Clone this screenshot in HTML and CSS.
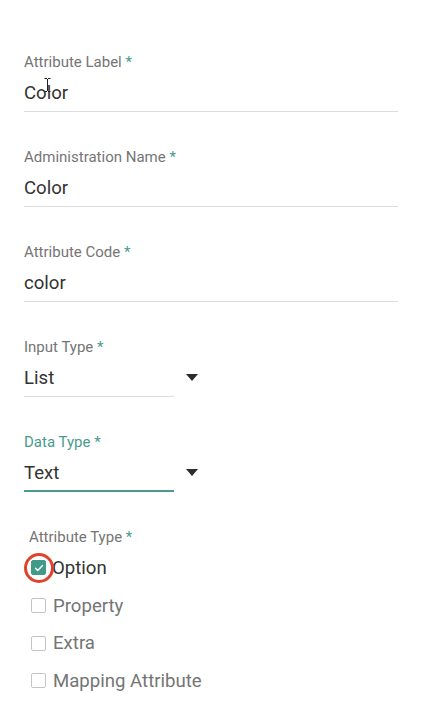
FILE: index.html
```html
<!DOCTYPE html>
<html>
<head>
<meta charset="utf-8">
<link rel="stylesheet" href="styles.css">
</head>
<body>
<form class="form">
  <div class="field">
    <div class="label">Attribute Label <span class="req">*</span></div>
    <div class="input">Color<svg class="ibeam" width="7" height="14" viewBox="0 0 7 14"><path d="M0.5 0.5h2.5M4 0.5h2.5M3.5 1v12M0.5 13.5h2.5M4 13.5h2.5" stroke="#222" stroke-width="1" fill="none"/></svg></div>
  </div>
  <div class="field">
    <div class="label">Administration Name <span class="req">*</span></div>
    <div class="input">Color</div>
  </div>
  <div class="field">
    <div class="label">Attribute Code <span class="req">*</span></div>
    <div class="input">color</div>
  </div>
  <div class="field">
    <div class="label">Input Type <span class="req">*</span></div>
    <div class="select-row">
      <div class="input select">List</div>
      <span class="arrow"></span>
    </div>
  </div>
  <div class="field focused">
    <div class="label">Data Type <span class="req">*</span></div>
    <div class="select-row">
      <div class="input select">Text</div>
      <span class="arrow"></span>
    </div>
  </div>
  <div class="group">
    <div class="group-label">Attribute Type <span class="req">*</span></div>
    <div class="checks">
      <label class="check checked">
        <span class="box"><svg width="10" height="10" viewBox="0 0 10 10"><path d="M1.5 5.2l2.3 2.3 4.7-5" stroke="#fff" stroke-width="1.4" fill="none" stroke-linecap="round" stroke-linejoin="round"/></svg><span class="ring"></span></span>
        <span class="text">Option</span>
      </label>
      <label class="check"><span class="box"></span><span class="text">Property</span></label>
      <label class="check"><span class="box"></span><span class="text">Extra</span></label>
      <label class="check"><span class="box"></span><span class="text">Mapping Attribute</span></label>
    </div>
  </div>
</form>
</body>
</html>
```

FILE: styles.css
```css
html, body {
  margin: 0;
  padding: 0;
  background: #fff;
}
body {
  font-family: Roboto, "Liberation Sans", sans-serif;
  color: #333;
}
.form {
  padding: 54px 0 0 24px;
  width: 374px;
}
.field {
  margin-bottom: 37px;
}
.label {
  font-size: 15px;
  line-height: 16px;
  color: #757575;
}
.req {
  color: #4a9a8e;
}
.input {
  position: relative;
  margin-top: 11px;
  font-size: 18.6px;
  line-height: 24px;
  padding-bottom: 6px;
  border-bottom: 1px solid #dcdcdc;
  color: #333;
}
.ibeam {
  position: absolute;
  left: 20px;
  top: -3px;
}
.select-row {
  display: flex;
  align-items: flex-end;
}
.select {
  width: 150px;
}
.arrow {
  width: 0;
  height: 0;
  border-left: 6.5px solid transparent;
  border-right: 6.5px solid transparent;
  border-top: 7px solid #2b2b2b;
  margin: 0 0 16px 12px;
}
.focused .label {
  color: #4a9a8e;
}
.focused .input {
  border-bottom: 2px solid #4a9a8e;
  padding-bottom: 5px;
}
.group {
  margin-top: 2px;
  padding-left: 5px;
}
.group-label {
  font-size: 15px;
  line-height: 16px;
  color: #757575;
}
.checks {
  display: flex;
  flex-direction: column;
  margin-top: 4px;
}
.check {
  display: flex;
  align-items: center;
  height: 37.7px;
  margin-top: -6px;
  margin-bottom: 6px;
}
.check:first-child {
  margin-top: 0;
}
.box {
  position: relative;
  box-sizing: border-box;
  width: 15px;
  height: 15px;
  margin-left: 2px;
  border: 1px solid #c4c4c4;
  border-radius: 2px;
  display: flex;
  align-items: center;
  justify-content: center;
}
.checked .box {
  background: #3f9a8a;
  border-color: #3f9a8a;
}
.ring {
  position: absolute;
  left: -8.5px;
  top: -8.5px;
  width: 30px;
  height: 30px;
  border: 3px solid #e2412b;
  border-radius: 50%;
  box-sizing: border-box;
}
.text {
  margin-left: 7px;
  font-size: 18.6px;
  color: #757575;
}
.checked .text {
  color: #333;
  margin-left: 6px;
}
```
